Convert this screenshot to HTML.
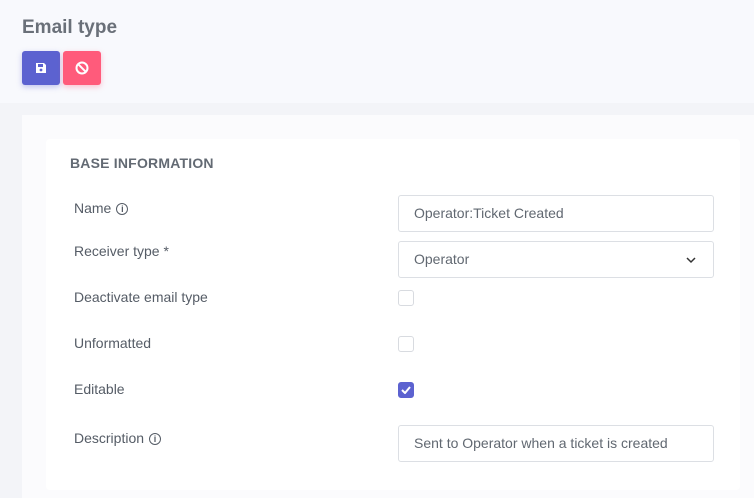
<!DOCTYPE html>
<html><head><style>
*{box-sizing:border-box;margin:0;padding:0}
body{width:754px;height:498px;background:#f3f4f8;font-family:"Liberation Sans",sans-serif;position:relative;overflow:hidden;color:#5a6169}
.hdr{position:absolute;left:0;top:0;width:754px;height:103px;background:#f8f9fd}
h1{position:absolute;left:22px;top:17px;font-size:19px;font-weight:bold;color:#6a7079}
.btn{position:absolute;top:51px;width:38px;height:34px;border-radius:3px;display:flex;align-items:center;justify-content:center}
.outer{position:absolute;left:22px;top:115px;width:732px;height:383px;background:#fbfbfd}
.card{position:absolute;left:46px;top:139px;width:694px;height:351px;background:#fff;border-radius:4px}
.t{position:absolute;left:70px;top:155px;font-size:14px;font-weight:bold;color:#636a73;letter-spacing:.2px}
.l{position:absolute;left:74px;font-size:14px;color:#555c66}
.in{position:absolute;left:398px;width:316px;height:37px;border:1px solid #dcdfe4;border-radius:3px;font-size:14px;color:#616871;padding:9px 15px}
.cb{position:absolute;left:398px;width:16px;height:16px;border:1px solid #d8dbe0;border-radius:3px}
.i{display:inline-block;width:12px;height:12px;border:1.3px solid #555c66;border-radius:50%;font-size:9px;text-align:center;line-height:10px;margin-left:5px;vertical-align:1px;font-weight:bold}
</style></head><body>
<div class="hdr"></div>
<h1>Email type</h1>
<div class="btn" style="left:22px;background:#5c62d0;box-shadow:0 2px 6px rgba(92,98,208,.35)"><svg width="12" height="12" viewBox="0 0 12 12"><path d="M1 1h8l2 2v8H1z" fill="#fff"/><rect x="3" y="2" width="5" height="3" fill="#5c62d0"/><circle cx="6" cy="8" r="1.4" fill="#5c62d0"/></svg></div>
<div class="btn" style="left:63px;background:#ff5b7b;box-shadow:0 2px 6px rgba(255,91,123,.35)"><svg width="14" height="14" viewBox="0 0 14 14"><circle cx="7" cy="7" r="5.5" fill="none" stroke="#fff" stroke-width="2"/><path d="M3.2 3.2l7.6 7.6" stroke="#fff" stroke-width="2"/></svg></div>
<div class="outer"></div>
<div class="card"></div>
<div class="t">BASE INFORMATION</div>
<div class="l" style="top:200px">Name<span class="i">i</span></div>
<div class="l" style="top:243px">Receiver type *</div>
<div class="l" style="top:289px">Deactivate email type</div>
<div class="l" style="top:335px">Unformatted</div>
<div class="l" style="top:381px">Editable</div>
<div class="l" style="top:430px">Description<span class="i">i</span></div>
<div class="in" style="top:195px">Operator:Ticket Created</div>
<div class="in" style="top:241px">Operator<svg style="position:absolute;right:17px;top:15px" width="10" height="7" viewBox="0 0 10 7"><path d="M1 1l4 4 4-4" fill="none" stroke="#333" stroke-width="1.5"/></svg></div>
<div class="cb" style="top:290px"></div>
<div class="cb" style="top:336px"></div>
<div class="cb" style="top:382px;background:#5c62d0;border-color:#5c62d0"><svg style="position:absolute;left:2px;top:3px" width="10" height="8" viewBox="0 0 10 8"><path d="M1 4l3 3 5-6" fill="none" stroke="#fff" stroke-width="2"/></svg></div>
<div class="in" style="top:425px">Sent to Operator when a ticket is created</div>
</body></html>
